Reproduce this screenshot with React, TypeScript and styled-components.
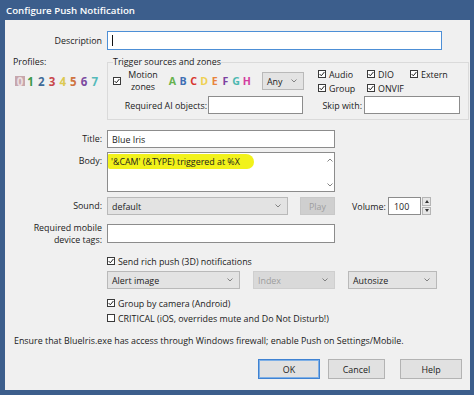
import React from "react";
import styled, { createGlobalStyle } from "styled-components";

const Global = createGlobalStyle`
  html, body { margin: 0; padding: 0; background: #ffffff; }
  body { font-family: "Open Sans", "Noto Sans", sans-serif; }
  * { box-sizing: border-box; }
`;

const Window = styled.div`
  width: 474px;
  height: 395px;
  background: #3c5e8c;
  padding: 0 4px 5px 5px;
  display: flex;
  flex-direction: column;
  font-family: "Open Sans", "Noto Sans", sans-serif;
  font-size: 8.9px;
  color: #1b1b1b;
`;

const TitleBar = styled.div`
  height: 20px;
  display: flex;
  align-items: center;
  padding-left: 1px;
  color: #ffffff;
  font-weight: 600;
  font-size: 9.7px;
`;

const Content = styled.div`
  flex: 1;
  background: #f0f0f0;
  display: flex;
  flex-direction: column;
  padding-top: 11px;
`;

const FieldRow = styled.div<{ $top: number; $h: number; $align?: string }>`
  display: flex;
  align-items: ${(p) => p.$align ?? "center"};
  margin-top: ${(p) => p.$top}px;
  height: ${(p) => p.$h}px;
  flex-shrink: 0;
`;

const FieldLabel = styled.div<{ $pt?: number }>`
  width: 97px;
  margin-right: 5px;
  text-align: right;
  flex-shrink: 0;
  line-height: 12px;
  padding-top: ${(p) => p.$pt ?? 0}px;
  white-space: nowrap;
`;

const TextField = styled.div<{ $w: number; $focused?: boolean }>`
  width: ${(p) => p.$w}px;
  height: 100%;
  background: #ffffff;
  border: 1px solid ${(p) => (p.$focused ? "#4d8fd6" : "#8c8c8c")};
  display: flex;
  align-items: center;
  padding-left: 4px;
  flex-shrink: 0;
`;

const Caret = styled.span`
  width: 1px;
  height: 11px;
  background: #111;
`;

const Section = styled.div`
  display: flex;
  margin-top: 6px;
  flex-shrink: 0;
`;

const ProfilesCol = styled.div`
  width: 102px;
  padding-left: 8px;
  display: flex;
  flex-direction: column;
`;

const PlainLabel = styled.div`
  line-height: 12px;
`;

const DigitRow = styled.div`
  display: flex;
  margin-top: 8px;
  margin-left: 1.6px;
`;

const Digit = styled.span<{ $color: string; $bg?: string }>`
  width: 10.7px;
  height: 10px;
  display: flex;
  align-items: center;
  justify-content: center;
  font-weight: 700;
  font-size: 11.5px;
  color: ${(p) => p.$color};
  background: ${(p) => p.$bg ?? "transparent"};
  background-clip: content-box;
  padding: 0 0.35px;
`;

const GroupBox = styled.fieldset`
  margin: 0;
  padding: 0 0 5px 5px;
  border: 1px solid #dadada;
  width: 362px;
  min-inline-size: 0;
`;

const GroupTitle = styled.legend`
  padding: 0;
  line-height: 12px;
`;

const TriggerRow = styled.div`
  display: flex;
  align-items: center;
  height: 26px;
`;

const MotionText = styled.div`
  width: 32px;
  margin-left: 6px;
  text-align: center;
  line-height: 12px;
`;

const Letters = styled.div`
  display: flex;
  margin-left: 8px;
`;

const Letter = styled.span<{ $color: string }>`
  width: 10.64px;
  text-align: center;
  font-weight: 700;
  font-size: 10.6px;
  color: ${(p) => p.$color};
`;

const Select = styled.div<{ $w: number; $ml?: number; $disabled?: boolean }>`
  width: ${(p) => p.$w}px;
  height: 100%;
  margin-left: ${(p) => p.$ml ?? 0}px;
  background: ${(p) => (p.$disabled ? "#d9d9d9" : "#e3e3e3")};
  border: 1px solid ${(p) => (p.$disabled ? "#cfcfcf" : "#b9b9b9")};
  color: ${(p) => (p.$disabled ? "#9d9d9d" : "#1b1b1b")};
  display: flex;
  align-items: center;
  justify-content: space-between;
  padding: 0 6px 0 4px;
  flex-shrink: 0;
`;

const AnySelect = styled(Select)`
  height: 18px;
  margin-left: 10px;
`;

const CheckGrid = styled.div`
  display: grid;
  grid-template-columns: 49px 43px auto;
  grid-auto-rows: 14px;
  margin-left: 14px;
  align-items: center;
`;

const CheckItem = styled.div`
  display: flex;
  align-items: center;
  gap: 3px;
  white-space: nowrap;
`;

const Box = styled.span`
  width: 8px;
  height: 8px;
  border: 1px solid #3a3a3a;
  background: #ffffff;
  display: inline-flex;
  align-items: center;
  justify-content: center;
  flex-shrink: 0;
`;

const AiRow = styled.div`
  display: flex;
  align-items: center;
  height: 18px;
  margin-top: 2px;
`;

const InlineLabel = styled.div<{ $w: number; $mr: number }>`
  width: ${(p) => p.$w}px;
  margin-right: ${(p) => p.$mr}px;
  text-align: right;
  flex-shrink: 0;
  white-space: nowrap;
`;

const TextArea = styled.div`
  width: 228px;
  height: 100%;
  background: #ffffff;
  border: 1px solid #8c8c8c;
  display: flex;
  justify-content: space-between;
`;

const AreaText = styled.div`
  padding-top: 1px;
`;

const Highlight = styled.span`
  display: inline-block;
  background: #f2f21a;
  padding: 2px 14px 2px 3px;
  line-height: 11px;
  border-radius: 1px 8px 7px 2px;
`;

const ScrollCol = styled.div`
  width: 9px;
  display: flex;
  flex-direction: column;
  justify-content: space-between;
  align-items: center;
  padding: 5px 0 4px;
`;

const Button = styled.div<{ $w: number; $ml?: number; $primary?: boolean; $disabled?: boolean }>`
  width: ${(p) => p.$w}px;
  height: 100%;
  margin-left: ${(p) => p.$ml ?? 0}px;
  display: flex;
  align-items: center;
  justify-content: center;
  background: ${(p) => (p.$disabled ? "#cfcfcf" : "#e1e1e1")};
  color: ${(p) => (p.$disabled ? "#9e9e9e" : "#1b1b1b")};
  border: 1px solid ${(p) => (p.$primary ? "#3f82d2" : p.$disabled ? "#c8c8c8" : "#b3b3b3")};
  box-shadow: ${(p) => (p.$primary ? "inset 0 0 0 1px #7fb0e6" : "none")};
  flex-shrink: 0;
`;

const VolumeLabel = styled.div`
  margin-left: 17px;
  margin-right: 1px;
  width: 35px;
  white-space: nowrap;
`;

const NumField = styled(TextField)`
  padding-left: 5px;
`;

const Spin = styled.div`
  width: 9px;
  height: 100%;
  margin-left: 1px;
  display: flex;
  flex-direction: column;
  gap: 1px;
`;

const SpinHalf = styled.div`
  flex: 1;
  background: #e6e6e6;
  border: 1px solid #b5b5b5;
  display: flex;
  align-items: center;
  justify-content: center;
`;

const Indented = styled.div<{ $top: number; $h: number }>`
  margin-left: 102px;
  margin-top: ${(p) => p.$top}px;
  height: ${(p) => p.$h}px;
  display: flex;
  align-items: center;
  flex-shrink: 0;
`;

const Note = styled.div`
  margin-top: 10px;
  padding-left: 9px;
  line-height: 12px;
  white-space: nowrap;
`;

const ButtonBar = styled.div`
  display: flex;
  justify-content: flex-end;
  height: 20px;
  margin-top: 12px;
  padding-right: 8px;
`;

const Chevron = ({ up }: { up?: boolean }) => (
  <svg width="6" height="4" viewBox="0 0 6 4">
    <polyline
      points={up ? "0.5,3.5 3,1 5.5,3.5" : "0.5,0.5 3,3 5.5,0.5"}
      fill="none"
      stroke="#777"
      strokeWidth="0.9"
    />
  </svg>
);

const Tri = ({ up }: { up?: boolean }) => (
  <svg width="4" height="3" viewBox="0 0 4 3">
    <polygon points={up ? "0,3 2,0 4,3" : "0,0 4,0 2,3"} fill="#333" />
  </svg>
);

const Check = ({ checked = true, label }: { checked?: boolean; label?: string }) => (
  <CheckItem>
    <Box>
      {checked && (
        <svg width="6" height="6" viewBox="0 0 6 6">
          <polyline points="0.6,3 2.3,4.8 5.4,1" fill="none" stroke="#222" strokeWidth="1" />
        </svg>
      )}
    </Box>
    {label && <span>{label}</span>}
  </CheckItem>
);

const digits: { d: string; c: string; bg?: string }[] = [
  { d: "0", c: "#ecdfe1", bg: "#c7a7ac" },
  { d: "1", c: "#3c9a4a" },
  { d: "2", c: "#3f6b98" },
  { d: "3", c: "#c9474b" },
  { d: "4", c: "#dcc951" },
  { d: "5", c: "#cf7441" },
  { d: "6", c: "#7c4aa0" },
  { d: "7", c: "#55baba" },
];

const letters: { l: string; c: string }[] = [
  { l: "A", c: "#66b24d" },
  { l: "B", c: "#3f6fb4" },
  { l: "C", c: "#d8352d" },
  { l: "D", c: "#efd053" },
  { l: "E", c: "#e8833c" },
  { l: "F", c: "#7d41a1" },
  { l: "G", c: "#4db8b0" },
  { l: "H", c: "#d33c9f" },
];

export default function App() {
  return (
    <>
      <Global />
      <Window>
        <TitleBar>Configure Push Notification</TitleBar>
        <Content>
          <FieldRow $top={0} $h={19}>
            <FieldLabel>Description</FieldLabel>
            <TextField $w={335} $focused>
              <Caret />
            </TextField>
          </FieldRow>

          <Section>
            <ProfilesCol>
              <PlainLabel>Profiles:</PlainLabel>
              <DigitRow>
                {digits.map((d) => (
                  <Digit key={d.d} $color={d.c} $bg={d.bg}>
                    {d.d}
                  </Digit>
                ))}
              </DigitRow>
            </ProfilesCol>
            <GroupBox>
              <GroupTitle>Trigger sources and zones</GroupTitle>
              <TriggerRow>
                <Check />
                <MotionText>
                  Motion
                  <br />
                  zones
                </MotionText>
                <Letters>
                  {letters.map((l) => (
                    <Letter key={l.l} $color={l.c}>
                      {l.l}
                    </Letter>
                  ))}
                </Letters>
                <AnySelect $w={42}>
                  <span>Any</span>
                  <Chevron />
                </AnySelect>
                <CheckGrid>
                  <Check label="Audio" />
                  <Check label="DIO" />
                  <Check label="Extern" />
                  <Check label="Group" />
                  <Check label="ONVIF" />
                </CheckGrid>
              </TriggerRow>
              <AiRow>
                <InlineLabel $w={94} $mr={1}>
                  Required AI objects:
                </InlineLabel>
                <TextField $w={95} />
                <InlineLabel $w={59} $mr={2}>
                  Skip with:
                </InlineLabel>
                <TextField $w={96} />
              </AiRow>
            </GroupBox>
          </Section>

          <FieldRow $top={10} $h={18}>
            <FieldLabel>Title:</FieldLabel>
            <TextField $w={228}>Blue Iris</TextField>
          </FieldRow>

          <FieldRow $top={4} $h={40} $align="flex-start">
            <FieldLabel $pt={3}>Body:</FieldLabel>
            <TextArea>
              <AreaText>
                <Highlight>'&amp;CAM' (&amp;TYPE) triggered at %X</Highlight>
              </AreaText>
              <ScrollCol>
                <Chevron up />
                <Chevron />
              </ScrollCol>
            </TextArea>
          </FieldRow>

          <FieldRow $top={5} $h={18}>
            <FieldLabel>Sound:</FieldLabel>
            <Select $w={181}>
              <span>default</span>
              <Chevron />
            </Select>
            <Button $w={35} $ml={12} $disabled>
              Play
            </Button>
            <VolumeLabel>Volume:</VolumeLabel>
            <NumField $w={33}>100</NumField>
            <Spin>
              <SpinHalf>
                <Tri up />
              </SpinHalf>
              <SpinHalf>
                <Tri />
              </SpinHalf>
            </Spin>
          </FieldRow>

          <FieldRow $top={9} $h={19}>
            <FieldLabel>
              Required mobile
              <br />
              device tags:
            </FieldLabel>
            <TextField $w={228} />
          </FieldRow>

          <Indented $top={11} $h={14}>
            <Check label="Send rich push (3D) notifications" />
          </Indented>

          <FieldRow $top={3} $h={18}>
            <FieldLabel />
            <Select $w={133}>
              <span>Alert image</span>
              <Chevron />
            </Select>
            <Select $w={82} $ml={13} $disabled>
              <span>Index</span>
              <Chevron />
            </Select>
            <Select $w={89} $ml={13}>
              <span>Autosize</span>
              <Chevron />
            </Select>
          </FieldRow>

          <Indented $top={7} $h={14}>
            <Check label="Group by camera (Android)" />
          </Indented>
          <Indented $top={1} $h={14}>
            <Check checked={false} label="CRITICAL (iOS, overrides mute and Do Not Disturb!)" />
          </Indented>

          <Note>Ensure that BlueIris.exe has access through Windows firewall; enable Push on Settings/Mobile.</Note>

          <ButtonBar>
            <Button $w={62} $primary>
              OK
            </Button>
            <Button $w={57} $ml={8}>
              Cancel
            </Button>
            <Button $w={62} $ml={15}>
              Help
            </Button>
          </ButtonBar>
        </Content>
      </Window>
    </>
  );
}
